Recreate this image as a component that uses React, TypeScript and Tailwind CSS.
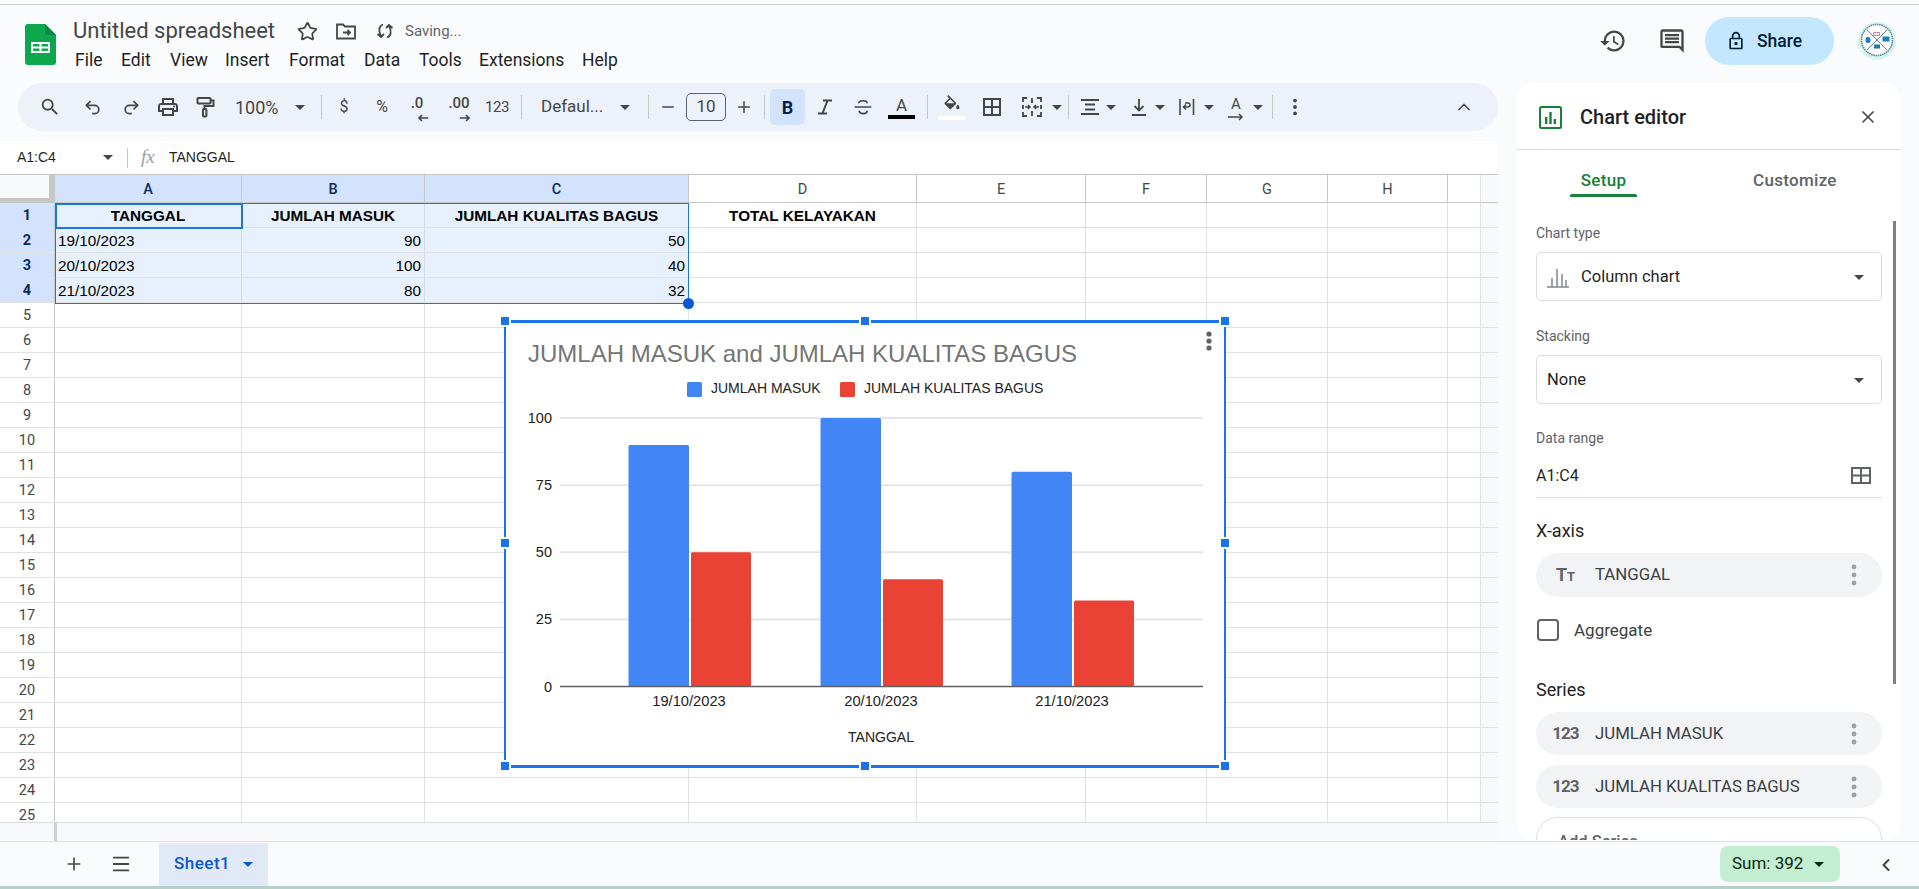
import type { ReactNode } from "react";
import { ChevronLeft, ChevronUp, Menu, Minus, Plus, Star, X } from "lucide-react";

const arial = "[font-family:'Liberation_Sans',Arial,sans-serif]";

const columns = [
  { name: "A", width: "w-[187px]", selected: true },
  { name: "B", width: "w-[183px]", selected: true },
  { name: "C", width: "w-[264px]", selected: true },
  { name: "D", width: "w-[228px]", selected: false },
  { name: "E", width: "w-[169px]", selected: false },
  { name: "F", width: "w-[121px]", selected: false },
  { name: "G", width: "w-[121px]", selected: false },
  { name: "H", width: "w-[120px]", selected: false },
];

const cells: Record<number, string[]> = {
  1: ["TANGGAL", "JUMLAH MASUK", "JUMLAH KUALITAS BAGUS", "TOTAL KELAYAKAN"],
  2: ["19/10/2023", "90", "50"],
  3: ["20/10/2023", "100", "40"],
  4: ["21/10/2023", "80", "32"],
};

const rows = Array.from({ length: 25 }, (_, i) => i + 1);

const menus = [
  { name: "File", width: "w-[46px]" },
  { name: "Edit", width: "w-[49px]" },
  { name: "View", width: "w-[55px]" },
  { name: "Insert", width: "w-[64px]" },
  { name: "Format", width: "w-[75px]" },
  { name: "Data", width: "w-[55px]" },
  { name: "Tools", width: "w-[60px]" },
  { name: "Extensions", width: "w-[103px]" },
  { name: "Help", width: "w-[40px]" },
];

function Slot({ className = "", children }: { className?: string; children?: ReactNode }) {
  return (
    <div className={`flex h-6 w-6 shrink-0 items-center justify-center text-[#444746] ${className}`}>
      {children}
    </div>
  );
}

function Icon({ d, size = 20, className = "" }: { d: string; size?: number; className?: string }) {
  return (
    <svg width={size} height={size} viewBox="0 0 24 24" fill="currentColor" className={className}>
      <path d={d} />
    </svg>
  );
}

function Caret({ className = "" }: { className?: string }) {
  return (
    <svg width="10" height="5" viewBox="0 0 10 5" className={`shrink-0 ${className}`}>
      <path d="M0 0h10L5 5z" fill="currentColor" />
    </svg>
  );
}

function Sep({ className = "" }: { className?: string }) {
  return <div className={`h-[24px] w-px shrink-0 bg-[#c7c7c7] ${className}`} />;
}

function Kebab({ className = "" }: { className?: string }) {
  return (
    <svg width="6" height="22" viewBox="0 0 6 22" className={className}>
      <circle cx="3" cy="3" r="2.4" fill="currentColor" />
      <circle cx="3" cy="11" r="2.4" fill="currentColor" />
      <circle cx="3" cy="19" r="2.4" fill="currentColor" />
    </svg>
  );
}

function Logo() {
  return (
    <svg width="31" height="41" viewBox="0 0 31 41" className="shrink-0">
      <path d="M3 0H20L31 11V38a3 3 0 0 1-3 3H3a3 3 0 0 1-3-3V3a3 3 0 0 1 3-3z" fill="#0da84e" />
      <path d="M20 0L31 11H22a2 2 0 0 1-2-2z" fill="#0a8a3e" />
      <path
        fill="#fff"
        fillRule="evenodd"
        d="M6 18h19v11H6zM8 20v2.5h6.5V20zM16.5 20v2.5H23V20zM8 24.5V27h6.5v-2.5zM16.5 24.5V27H23v-2.5z"
      />
    </svg>
  );
}

function Avatar() {
  return (
    <svg width="38" height="38" viewBox="0 0 38 38">
      <circle cx="19" cy="19" r="19" fill="#d6f5ee" />
      <circle cx="19" cy="18" r="15.5" fill="#fff" stroke="#4d7f92" strokeWidth="1.6" strokeDasharray="1.4 0.8" />
      <path d="M9 8l20 20M29 8L9 28" stroke="#44606b" strokeWidth="0.8" />
      <rect x="7.5" y="15" width="5" height="6" rx="2" fill="#1a7fd0" />
      <rect x="24.5" y="14.5" width="7" height="5" fill="#1a7fbf" />
      <rect x="16" y="22.5" width="6" height="4" fill="#1f78a8" />
      <path d="M15.5 10.5h6v3h-6z" fill="none" stroke="#d15a86" strokeWidth="0.8" />
    </svg>
  );
}

function Toolbar() {
  return (
    <div className="ml-[18px] flex h-[48px] w-[1480px] items-center rounded-[24px] bg-[#edf2fa] pl-[20px] pr-[22px] text-[#444746]">
      <Slot>
        <Icon size={22} d="M15.5 14h-.79l-.28-.27A6.471 6.471 0 0 0 16 9.5 6.5 6.5 0 1 0 9.5 16c1.61 0 3.09-.59 4.23-1.57l.27.28v.79l5 4.99L20.49 19l-4.99-5zm-6 0C7.01 14 5 11.99 5 9.5S7.01 5 9.5 5 14 7.01 14 9.5 11.99 14 9.5 14z" />
      </Slot>
      <Slot className="ml-[19px]">
        <svg width="20" height="20" viewBox="0 0 24 24" fill="none" stroke="currentColor" strokeWidth="2">
          <path d="M9 15L4 10l5-5" />
          <path d="M4 10h10a5 5 0 0 1 0 10h-3" />
        </svg>
      </Slot>
      <Slot className="ml-[14px]">
        <svg width="20" height="20" viewBox="0 0 24 24" fill="none" stroke="currentColor" strokeWidth="2">
          <path d="M15 15l5-5-5-5" />
          <path d="M20 10H10a5 5 0 0 0 0 10h3" />
        </svg>
      </Slot>
      <Slot className="ml-[13px]">
        <svg width="24" height="24" viewBox="0 0 24 24" fill="currentColor">
          <path d="M19 8h-1V3H6v5H5c-1.66 0-3 1.34-3 3v6h4v4h12v-4h4v-6c0-1.66-1.34-3-3-3zM8 5h8v3H8V5zm8 12v2H8v-4h8v2zm2-2v-2H6v2H4v-4c0-.55.45-1 1-1h14c.55 0 1 .45 1 1v4h-2z" />
          <circle cx="18" cy="11.5" r="1" />
        </svg>
      </Slot>
      <Slot className="ml-[13px]">
        <svg width="24" height="24" viewBox="0 0 24 24" fill="none" stroke="currentColor" strokeWidth="2">
          <rect x="4.5" y="3" width="13" height="5.5" rx="0.8" />
          <path d="M17.5 5.5h3v5.5h-9v3" />
          <rect x="10" y="14" width="3.4" height="7.5" rx="0.8" />
        </svg>
      </Slot>
      <span className="ml-[18px] w-[44px] shrink-0 text-[18px]">100%</span>
      <Caret className="ml-[16px]" />
      <Sep className="ml-[16px]" />
      <Slot className="ml-[10px] text-[16px]">$</Slot>
      <Slot className="ml-[14px] text-[16px]">%</Slot>
      <Slot className="ml-[11px] relative text-[15px]">
        <span className="-mt-[7px] font-medium">.0</span>
        <svg width="12" height="8" viewBox="0 0 12 8" className="absolute bottom-[-3px] right-[0px]">
          <path d="M11 4H2M5 1L2 4l3 3" fill="none" stroke="currentColor" strokeWidth="1.6" />
        </svg>
      </Slot>
      <Slot className="ml-[18px] relative text-[15px]">
        <span className="-mt-[7px] font-medium">.00</span>
        <svg width="12" height="8" viewBox="0 0 12 8" className="absolute bottom-[-3px] right-[0px]">
          <path d="M1 4h9M7 1l3 3-3 3" fill="none" stroke="currentColor" strokeWidth="1.6" />
        </svg>
      </Slot>
      <Slot className="ml-[14px] text-[15px] tracking-[-0.4px]">123</Slot>
      <Sep className="ml-[12px]" />
      <span className="ml-[19px] w-[63px] shrink-0 text-[17px]">Defaul...</span>
      <Caret className="ml-[16px]" />
      <Sep className="ml-[18px]" />
      <Slot className="ml-[7px]">
        <Minus size={18} strokeWidth={2} />
      </Slot>
      <div className="ml-[6px] flex h-[28px] w-[40px] shrink-0 items-center justify-center rounded-[5px] border border-[#5f6368] text-[17px]">
        10
      </div>
      <Slot className="ml-[6px]">
        <Plus size={18} strokeWidth={2} />
      </Slot>
      <Sep className="ml-[8px]" />
      <div className="ml-[5px] flex h-[36px] w-[35px] shrink-0 items-center justify-center rounded-[5px] bg-[#d3e3fd] text-[18px] font-bold text-[#041e49]">
        B
      </div>
      <Slot className="ml-[8px]">
        <svg width="18" height="18" viewBox="0 0 18 18" fill="none" stroke="currentColor" strokeWidth="2">
          <path d="M7 2.5h9M2 15.5h9M11.5 2.5l-5 13" />
        </svg>
      </Slot>
      <Slot className="ml-[14px]">
        <svg width="20" height="20" viewBox="0 0 24 24" fill="none" stroke="currentColor" strokeWidth="2">
          <path d="M2 12h20M7 7.5c0-4 10-4 10 0M7.5 16.5c0 4.5 9.5 4.5 9.5 0" />
        </svg>
      </Slot>
      <div className="ml-[13px] flex w-[27px] shrink-0 flex-col items-center">
        <span className="text-[17px] leading-[18px]">A</span>
        <span className="mt-[1px] h-[4px] w-[27px] bg-black" />
      </div>
      <Sep className="ml-[12px]" />
      <div className="ml-[10px] flex w-[27px] shrink-0 flex-col items-center">
        <Icon size={20} d="M16.56 8.94L7.62 0 6.21 1.41l2.38 2.38-5.15 5.15c-.59.59-.59 1.54 0 2.12l5.5 5.5c.29.29.68.44 1.06.44s.77-.15 1.06-.44l5.5-5.5c.59-.58.59-1.53 0-2.12zM5.21 10L10 5.21 14.79 10H5.21zM19 11.5s-2 2.17-2 3.5c0 1.1.9 2 2 2s2-.9 2-2c0-1.33-2-3.5-2-3.5z" />
        <span className="mt-[1px] h-[4px] w-[27px] bg-white" />
      </div>
      <Slot className="ml-[15px]">
        <svg width="18" height="18" viewBox="0 0 18 18" fill="none" stroke="currentColor" strokeWidth="2">
          <path d="M1 1h16v16H1zM9 1v16M1 9h16" />
        </svg>
      </Slot>
      <Slot className="ml-[16px]">
        <svg width="20" height="20" viewBox="0 0 20 20" fill="none" stroke="currentColor" strokeWidth="1.8">
          <path d="M5 1H1v4M1 15v4h4M15 1h4v4M19 15v4h-4M1 8v4M19 8v4M10 1v5M10 14v5" />
          <path d="M3 10h5M6 8l2 2-2 2M17 10h-5M14 8l-2 2 2 2" strokeWidth="1.5" />
        </svg>
      </Slot>
      <Caret className="ml-[8px]" />
      <Sep className="ml-[6px]" />
      <Slot className="ml-[9px]">
        <svg width="18" height="18" viewBox="0 0 18 18" fill="none" stroke="currentColor" strokeWidth="2">
          <path d="M0 2h18M4 6.5h10M4 11.5h10M0 16h18" />
        </svg>
      </Slot>
      <Caret className="ml-[4px]" />
      <Slot className="ml-[11px]">
        <svg width="16" height="18" viewBox="0 0 16 18" fill="none" stroke="currentColor" strokeWidth="1.8">
          <path d="M8 1v11M3.5 8L8 12.5 12.5 8M1 17h14" />
        </svg>
      </Slot>
      <Caret className="ml-[4px]" />
      <Slot className="ml-[10px]">
        <svg width="16" height="18" viewBox="0 0 16 18" fill="none" stroke="currentColor" strokeWidth="1.6">
          <path d="M1 1v16M14.5 1v16M4 9h5a2 2 0 0 0 0-4H6M7 6.5L4.5 9 7 11.5" />
        </svg>
      </Slot>
      <Caret className="ml-[5px]" />
      <Slot className="relative ml-[10px] text-[15px]">
        <span className="-mt-[6px]">A</span>
        <svg width="16" height="8" viewBox="0 0 16 8" className="absolute bottom-[-2px] left-[4px]">
          <path d="M0 4h14M11 1l3 3-3 3" fill="none" stroke="currentColor" strokeWidth="1.5" />
        </svg>
      </Slot>
      <Caret className="ml-[5px]" />
      <Sep className="ml-[9px]" />
      <Slot className="ml-[10px]">
        <Kebab className="scale-[0.8]" />
      </Slot>
      <Slot className="ml-auto">
        <ChevronUp size={20} strokeWidth={2} />
      </Slot>
    </div>
  );
}

function FormulaBar() {
  return (
    <div className={`mt-[10px] flex h-[33px] w-[1497px] shrink-0 items-center bg-white text-[14px] text-[#1f1f1f] ${arial}`}>
      <span className="ml-[17px] w-[86px]">A1:C4</span>
      <Caret className="text-[#444746]" />
      <div className="ml-[14px] h-[20px] w-px bg-[#c7c7c7]" />
      <span className="ml-[13px] w-[28px] text-[19px] italic text-[#9aa0a6] [font-family:'Liberation_Serif',serif]">fx</span>
      <span>TANGGAL</span>
    </div>
  );
}

function Cell({ row, col, width, text }: { row: number; col: number; width: string; text?: string }) {
  const selected = col < 3 && row <= 4;
  const align =
    row === 1 ? "justify-center font-bold" : col === 0 ? "justify-start pl-[3px]" : "justify-end pr-[3px]";
  return (
    <div
      className={`flex h-full shrink-0 items-center overflow-hidden whitespace-nowrap border-r pt-[2px] text-[15.3px] text-black ${width} ${align} ${
        selected ? "border-[#d5dbe5] bg-[#e7f0fd]" : "border-[#e1e3e1] bg-white"
      }`}
    >
      {text}
    </div>
  );
}

function Chart() {
  const groups = [
    { label: "19/10/2023", x: 628.5, a: 90, b: 50 },
    { label: "20/10/2023", x: 820.5, a: 100, b: 40 },
    { label: "21/10/2023", x: 1011.5, a: 80, b: 32 },
  ];
  const axisY = 685.5;
  const unit = 2.684;
  const handleX = ["left-[-5px]", "left-[355px]", "left-[715px]"];
  const handleY = ["top-[-6px]", "top-[216px]", "top-[439px]"];
  return (
    <div className="absolute left-[504px] top-[145px] h-[448px] w-[722px] border-x-2 border-y-[3px] border-[#1a73e8] bg-white">
      <svg viewBox="506 322 718 442" width="718" height="442" className={`block ${arial}`}>
        <text x="528" y="360.5" fontSize="24" fill="#757575">
          JUMLAH MASUK and JUMLAH KUALITAS BAGUS
        </text>
        <circle cx="1209" cy="333" r="2.6" fill="#5f6368" />
        <circle cx="1209" cy="340" r="2.6" fill="#5f6368" />
        <circle cx="1209" cy="347" r="2.6" fill="#5f6368" />
        <rect x="687" y="381" width="15" height="15" rx="1.5" fill="#4285f4" />
        <text x="711" y="392" fontSize="14" fill="#222">JUMLAH MASUK</text>
        <rect x="840" y="381" width="15" height="15" rx="1.5" fill="#ea4335" />
        <text x="864" y="392" fontSize="14" fill="#222">JUMLAH KUALITAS BAGUS</text>
        {[100, 75, 50, 25].map((v) => (
          <g key={v}>
            <line x1="560" x2="1203" y1={axisY - v * unit} y2={axisY - v * unit} stroke="#e5e5e5" strokeWidth="2" />
          </g>
        ))}
        {[100, 75, 50, 25, 0].map((v) => (
          <text key={v} x="552" y={axisY - v * unit + 5} fontSize="14.5" textAnchor="end" fill="#222">
            {v}
          </text>
        ))}
        {groups.map((g) => (
          <g key={g.label}>
            <rect x={g.x} y={axisY - g.a * unit} width="60.5" height={g.a * unit} rx="1.5" fill="#4285f4" />
            <rect x={g.x + 62.5} y={axisY - g.b * unit} width="60" height={g.b * unit} rx="1.5" fill="#ea4335" />
            <text x={g.x + 60.5} y="705" fontSize="14.7" textAnchor="middle" fill="#222">
              {g.label}
            </text>
          </g>
        ))}
        <line x1="560" x2="1203" y1={axisY} y2={axisY} stroke="#5f5f5f" strokeWidth="1.5" />
        <text x="881" y="741" fontSize="14" textAnchor="middle" fill="#222">
          TANGGAL
        </text>
      </svg>
      {handleY.map((top, i) =>
        handleX.map((left, j) =>
          i === 1 && j === 1 ? null : (
            <div key={`${i}-${j}`} className={`absolute h-[8px] w-[8px] bg-[#1a73e8] ring-2 ring-white ${top} ${left}`} />
          ),
        ),
      )}
    </div>
  );
}

function Grid() {
  return (
    <div className={`relative h-[648px] w-[1498px] shrink-0 overflow-hidden border-t border-[#c7c7c7] bg-white ${arial}`}>
      <div className="flex h-[28px] border-b border-[#c7c7c7]">
        <div className="h-[27px] w-[55px] shrink-0 border-b-[4px] border-r-[6px] border-[#c7c7c7] bg-[#f8f9fa]" />
        {columns.map((c) => (
          <div
            key={c.name}
            className={`flex shrink-0 items-center justify-center border-r border-[#c7c7c7] pt-[2px] text-[14.5px] [font-family:Roboto,sans-serif] ${c.width} ${
              c.selected ? "bg-[#d3e3fd] font-medium text-[#0b2a5c]" : "bg-white text-[#444746]"
            }`}
          >
            {c.name}
          </div>
        ))}
        <div className="w-[32px] shrink-0 bg-white" />
        <div className="w-[18px] shrink-0 border-l border-[#e1e3e1] bg-[#f8f9fa]" />
      </div>
      {rows.map((row) => (
        <div key={row} className="flex h-[25px] border-b border-[#e1e3e1]">
          <div
            className={`flex w-[55px] shrink-0 items-center justify-center border-r border-[#c7c7c7] pt-[2px] text-[14.5px] [font-family:Roboto,sans-serif] ${
              row <= 4 ? "bg-[#d3e3fd] font-bold text-[#0b2a5c]" : "bg-white text-[#444746]"
            }`}
          >
            {row}
          </div>
          {columns.map((c, col) => (
            <Cell key={c.name} row={row} col={col} width={c.width} text={cells[row]?.[col]} />
          ))}
          <div className="w-[32px] shrink-0 bg-white" />
          <div className="w-[18px] shrink-0 border-l border-[#e1e3e1] bg-[#f8f9fa]" />
        </div>
      ))}
      <div className="absolute left-[55px] top-[28px] h-[101px] w-[634px] border border-[#1a73e8]" />
      <div className="absolute left-[55px] top-[28px] h-[26px] w-[188px] border-2 border-[#1a73e8]" />
      <div className="absolute left-[683px] top-[123px] h-[11px] w-[11px] rounded-full bg-[#0b57d0]" />
      <Chart />
    </div>
  );
}

function SelectBox({ children }: { children: ReactNode }) {
  return (
    <div className="flex h-[49px] w-[346px] items-center rounded-[5px] border border-[#dadce0] pl-[10px] pr-[17px] pt-[2px] text-[16.5px] text-[#1f1f1f]">
      {children}
      <Caret className="ml-auto text-[#444746]" />
    </div>
  );
}

function FieldPill({ icon, label, className = "" }: { icon: ReactNode; label: string; className?: string }) {
  return (
    <div className={`flex w-[346px] items-center rounded-full bg-[#f1f3f4] text-[16.8px] text-[#3c4043] ${className}`}>
      <div className="flex w-[59px] shrink-0 justify-center">{icon}</div>
      <span>{label}</span>
      <Kebab className="ml-auto mr-[25px] text-[#9aa0a6]" />
    </div>
  );
}

function Num() {
  return <span className="text-[17px] font-bold tracking-[-1px] text-[#5f6368]">123</span>;
}

function ChartEditor() {
  return (
    <div className="relative ml-[19px] h-[757px] w-[384px] overflow-hidden rounded-[16px] bg-white">
      <div className="flex h-[67px] items-center border-b border-[#dadce0] pl-[22px]">
        <svg width="23" height="23" viewBox="0 0 23 23" className="mt-[2px]">
          <rect x="1" y="1" width="21" height="21" rx="1.5" fill="none" stroke="#188038" strokeWidth="2" />
          <path d="M6 11h2.4v7H6zM10.3 6h2.4v12h-2.4zM14.6 13H17v5h-2.4z" fill="#188038" />
        </svg>
        <span className="ml-[18px] mt-[1px] text-[20px] font-medium text-[#1f1f1f]">Chart editor</span>
        <X size={20} strokeWidth={2} className="ml-auto mr-[23px] mt-[2px] text-[#444746]" />
      </div>
      <div className="flex h-[47px] text-[17px] font-medium tracking-[0.3px]">
        <div className="relative ml-[53px] flex w-[67px] items-center justify-center pt-[14px] text-[#188038]">
          Setup
          <span className="absolute bottom-0 left-0 h-[3px] w-full rounded-t-[2px] bg-[#188038]" />
        </div>
        <div className="ml-[116px] flex items-center pt-[14px] text-[#5f6368]">Customize</div>
      </div>
      <div className="pl-[19px]">
        <div className="mt-[26px] text-[14px] leading-[20px] text-[#5f6368]">Chart type</div>
        <div className="mt-[9px]">
          <SelectBox>
            <svg width="22" height="20" viewBox="0 0 22 20" className="mr-[12px] shrink-0" fill="none" stroke="#80868b" strokeWidth="1.5">
              <path d="M0 19h22M5 19V10M10 19V1M15 19V6M19 19v-7" />
            </svg>
            Column chart
          </SelectBox>
        </div>
        <div className="mt-[25px] text-[14px] leading-[20px] text-[#5f6368]">Stacking</div>
        <div className="mt-[9px]">
          <SelectBox>None</SelectBox>
        </div>
        <div className="mt-[24px] text-[14px] leading-[20px] text-[#5f6368]">Data range</div>
        <div className="mt-[16px] flex h-[34px] w-[346px] items-start border-b border-[#dadce0] pr-[11px] text-[16px] leading-[24px] text-[#1f1f1f]">
          A1:C4
          <svg width="20" height="17" viewBox="0 0 20 17" className="ml-auto mt-[3px]" fill="none" stroke="#5f6368" strokeWidth="2">
            <path d="M1 1h18v15H1zM10 1v15M1 8.5h18" />
          </svg>
        </div>
        <div className="mt-[21px] text-[18px] leading-[24px] text-[#1f1f1f]">X-axis</div>
        <FieldPill
          className="mt-[10px] h-[44px]"
          label="TANGGAL"
          icon={
            <span className="font-bold text-[#5f6368] [font-family:'Liberation_Sans',sans-serif]">
              <span className="text-[18px]">T</span>
              <span className="text-[13px]">T</span>
            </span>
          }
        />
        <div className="mt-[22px] flex h-[22px] items-center">
          <div className="ml-[1px] h-[22px] w-[22px] rounded-[4px] border-2 border-[#5f6368]" />
          <span className="ml-[15px] mt-[2px] text-[17px] text-[#3c4043]">Aggregate</span>
        </div>
        <div className="mt-[37px] text-[18px] leading-[24px] text-[#1f1f1f]">Series</div>
        <FieldPill className="mt-[10px] h-[43px]" label="JUMLAH MASUK" icon={<Num />} />
        <FieldPill className="mt-[10px] h-[43px]" label="JUMLAH KUALITAS BAGUS" icon={<Num />} />
        <div className="mt-[9px] h-[44px] w-[346px] rounded-t-[22px] border border-[#dadce0] pl-[21px] pt-[12px] text-[16.5px] font-medium text-[#5f6368]">
          Add Series
        </div>
      </div>
      <div className="absolute right-[5px] top-[138px] h-[463px] w-[3px] bg-[#808080]" />
    </div>
  );
}

export default function App() {
  return (
    <div className="flex h-[889px] w-[1919px] flex-col overflow-hidden bg-[#f9fbfd] [font-family:Roboto,sans-serif]">
      <div className="h-[5px] shrink-0 border-b border-[#cfcfcf] bg-white" />
      <header className="flex h-[78px] shrink-0">
        <div className="ml-[25px] mt-[19px]">
          <Logo />
        </div>
        <div className="ml-[17px] mt-[9px] flex flex-col">
          <div className="flex h-[34px] items-center text-[#444746]">
            <span className="w-[224px] text-[22px] leading-[28px]">Untitled spreadsheet</span>
            <Star size={21} strokeWidth={2} className="shrink-0" />
            <svg width="20" height="18" viewBox="0 0 20 18" className="ml-[18px] shrink-0" fill="none" stroke="currentColor" strokeWidth="1.8">
              <path d="M1 2.5h6l2 2h10v12H1zM7 10.5h7M11.5 8l2.5 2.5-2.5 2.5" />
            </svg>
            <svg width="18" height="18" viewBox="0 0 18 18" className="ml-[20px] shrink-0" fill="none" stroke="currentColor" strokeWidth="1.8">
              <path d="M7 2.5C3 3.5 2 9 5 14M1.5 12l3.5 3 3-3M11 15.5c4-1 5-6.5 2-11.5M16.5 6L13 3l-3 3" />
            </svg>
            <span className="ml-[11px] text-[15px] text-[#5f6368]">Saving...</span>
          </div>
          <nav className="ml-[2px] flex text-[17.5px] leading-[24px] text-[#1f1f1f]">
            {menus.map((m) => (
              <span key={m.name} className={m.width}>
                {m.name}
              </span>
            ))}
          </nav>
        </div>
        <div className="ml-auto mt-[12px] flex h-[48px] items-center">
          <Icon size={28} className="text-[#444746]" d="M13 3a9 9 0 0 0-9 9H1l3.89 3.89.07.14L9 12H6c0-3.87 3.13-7 7-7s7 3.13 7 7-3.13 7-7 7c-1.93 0-3.68-.79-4.94-2.06l-1.42 1.42A8.954 8.954 0 0 0 13 21a9 9 0 0 0 0-18zm-1 5v5l4.28 2.54.72-1.21-3.5-2.08V8H12z" />
          <Icon size={28} className="ml-[31px] text-[#444746]" d="M20 17.17L18.83 16H4V4h16v13.17zM20 2H4c-1.1 0-2 .9-2 2v12c0 1.1.9 2 2 2h14l4 4V4c0-1.1-.9-2-2-2zM6 12h12v2H6zM6 9h12v2H6zM6 6h12v2H6z" />
          <div className="ml-[19px] flex h-[48px] w-[129px] items-center rounded-full bg-[#c2e7ff] pl-[21px] text-[17.5px] font-medium text-[#001d35]">
            <Icon size={20} d="M18 8h-1V6c0-2.76-2.24-5-5-5S7 3.24 7 6v2H6c-1.1 0-2 .9-2 2v10c0 1.1.9 2 2 2h12c1.1 0 2-.9 2-2V10c0-1.1-.9-2-2-2zM9 6c0-1.66 1.34-3 3-3s3 1.34 3 3v2H9V6zm9 14H6V10h12v10zm-6-3c1.1 0 2-.9 2-2s-.9-2-2-2-2 .9-2 2 .9 2 2 2z" />
            <span className="ml-[11px]">Share</span>
          </div>
          <div className="ml-[24px] mr-[23px]">
            <Avatar />
          </div>
        </div>
      </header>
      <div className="flex h-[758px] shrink-0">
        <div className="flex w-[1498px] shrink-0 flex-col">
          <Toolbar />
          <FormulaBar />
          <Grid />
          <div className="h-[19px] shrink-0 border-t border-[#dadce0] bg-[#f8f9fa] pl-[54px]">
            <div className="h-full w-[3px] bg-[#d0d0d0]" />
          </div>
        </div>
        <ChartEditor />
      </div>
      <footer className="flex h-[45px] shrink-0 items-center border-t border-[#e1e3e1] text-[#444746]">
        <Plus size={20} strokeWidth={2} className="ml-[64px]" />
        <Menu size={22} strokeWidth={2} className="ml-[26px]" />
        <div className="ml-[27px] flex h-[43px] w-[109px] items-center rounded-t-[2px] bg-[#e1e9f7] pl-[15px] text-[17px] font-medium tracking-[0.5px] text-[#0b57d0]">
          Sheet1
          <Caret className="ml-[13px]" />
        </div>
        <div className="ml-auto flex h-[36px] w-[120px] items-center rounded-[8px] bg-[#c4eed0] pl-[12px] text-[17px] text-[#072711]">
          Sum: 392
          <Caret className="ml-[11px]" />
        </div>
        <ChevronLeft size={20} strokeWidth={2.5} className="ml-[36px] mr-[23px] mt-[2px]" />
      </footer>
      <div className="h-[3px] shrink-0 bg-[#b5cfc9]" />
    </div>
  );
}
